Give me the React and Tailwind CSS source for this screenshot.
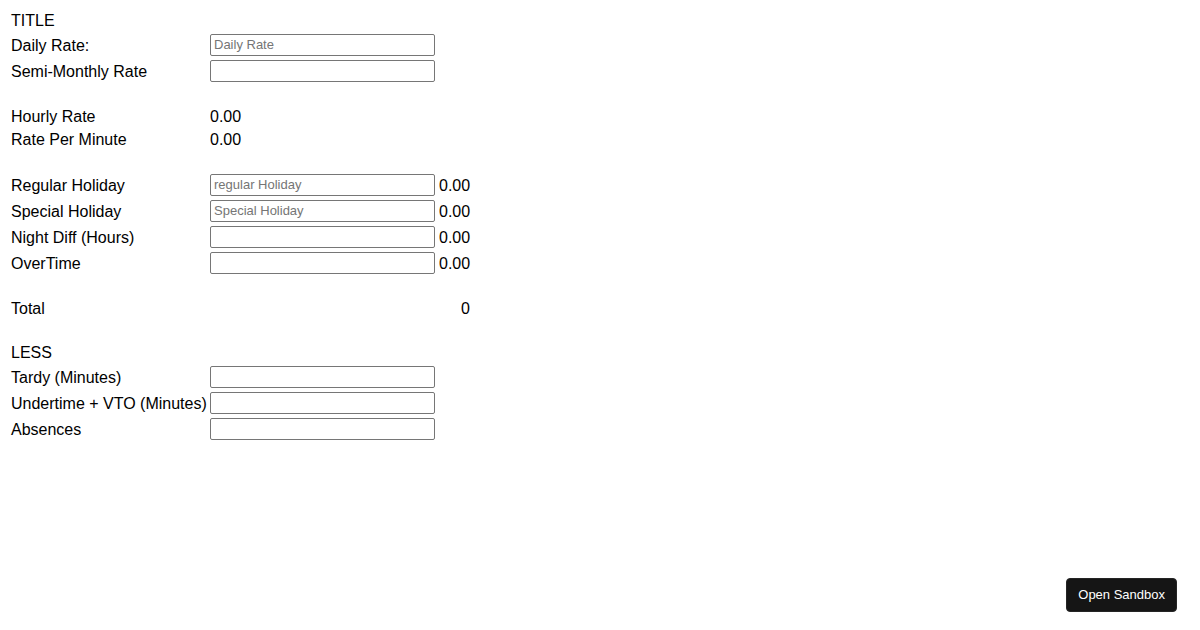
const rows = [
  { id: 'title', heading: 'TITLE' },
  { id: 'daily', label: 'Daily Rate:', input: true, placeholder: 'Daily Rate' },
  { id: 'semi', label: 'Semi-Monthly Rate', input: true },
  { id: 'gap-1', gap: true },
  { id: 'hourly', label: 'Hourly Rate', value: '0.00' },
  { id: 'minute', label: 'Rate Per Minute', value: '0.00' },
  { id: 'gap-2', gap: true },
  { id: 'regular', label: 'Regular Holiday', input: true, placeholder: 'regular Holiday', result: '0.00' },
  { id: 'special', label: 'Special Holiday', input: true, placeholder: 'Special Holiday', result: '0.00' },
  { id: 'night', label: 'Night Diff (Hours)', input: true, result: '0.00' },
  { id: 'overtime', label: 'OverTime', input: true, result: '0.00' },
  { id: 'gap-3', gap: true },
  { id: 'total', label: 'Total', result: '0' },
  { id: 'gap-4', gap: true },
  { id: 'less', heading: 'LESS' },
  { id: 'tardy', label: 'Tardy (Minutes)', input: true },
  { id: 'undertime', label: 'Undertime + VTO (Minutes)', input: true },
  { id: 'absences', label: 'Absences', input: true },
];

function Row({ row }) {
  if (row.gap) {
    return (
      <tr>
        <td colSpan={3} className="h-[19px] p-0" />
      </tr>
    );
  }
  if (row.heading) {
    return (
      <tr>
        <th colSpan={3} scope="colgroup" className="p-px text-left font-normal">
          {row.heading}
        </th>
      </tr>
    );
  }
  return (
    <tr>
      <td className="p-px whitespace-nowrap">
        {row.input ? <label htmlFor={row.id}>{row.label}</label> : row.label}
      </td>
      <td className="p-px">
        {row.input ? (
          <input
            id={row.id}
            type="text"
            placeholder={row.placeholder}
            className="block h-[22px] w-full rounded-[2px] border border-[#767676] bg-white px-[3px] pb-[2px] text-[13px] placeholder:text-[#757575]"
          />
        ) : (
          row.value
        )}
      </td>
      <td className="p-px text-right">{row.result}</td>
    </tr>
  );
}

export default function App() {
  return (
    <main className="bg-white p-2 font-['Helvetica','Liberation_Sans',sans-serif] text-base leading-[19px] text-black">
      <table className="w-[465px] table-fixed border-separate border-spacing-[2px]">
        <colgroup>
          <col className="w-[197px]" />
          <col className="w-[227px]" />
          <col />
        </colgroup>
        <tbody>
          {rows.map((row) => (
            <Row key={row.id} row={row} />
          ))}
        </tbody>
      </table>
      <button
        type="button"
        className="fixed right-[23px] bottom-[18px] h-[34px] rounded border border-[#252525] bg-[#151515] px-[11px] pb-[2px] text-[13px] text-white"
      >
        Open Sandbox
      </button>
    </main>
  );
}
